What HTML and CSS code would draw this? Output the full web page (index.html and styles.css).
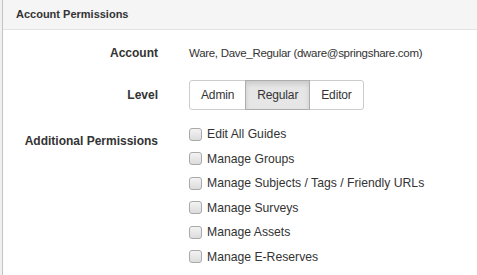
FILE: index.html
```html
<!DOCTYPE html>
<html>
<head>
<meta charset="utf-8">
<link rel="stylesheet" href="styles.css">
</head>
<body>
<div class="page">
  <div class="backdrop"></div>
  <div class="modal">
    <div class="modal-header">Account Permissions</div>
    <div class="modal-body">
      <div class="row row-account">
        <div class="label">Account</div>
        <div class="value">Ware, Dave_Regular (dware@springshare.com)</div>
      </div>
      <div class="row row-level">
        <div class="label">Level</div>
        <div class="value">
          <div class="btn-group">
            <span class="btn">Admin</span>
            <span class="btn active">Regular</span>
            <span class="btn">Editor</span>
          </div>
        </div>
      </div>
      <div class="row row-perms">
        <div class="label label-perms">Additional Permissions</div>
        <div class="value checks">
          <label class="check"><span class="box"></span>Edit All Guides</label>
          <label class="check"><span class="box"></span>Manage Groups</label>
          <label class="check"><span class="box"></span>Manage Subjects / Tags / Friendly URLs</label>
          <label class="check"><span class="box"></span>Manage Surveys</label>
          <label class="check"><span class="box"></span>Manage Assets</label>
          <label class="check"><span class="box"></span>Manage E-Reserves</label>
        </div>
      </div>
    </div>
  </div>
</div>
</body>
</html>
```
FILE: styles.css
```css
html, body {
  margin: 0;
  padding: 0;
  background: #fff;
}
body {
  font-family: "Liberation Sans", Arial, sans-serif;
  font-size: 12px;
  color: #333;
}
.page {
  display: flex;
  height: 275px;
  overflow: hidden;
}
.backdrop {
  width: 2px;
  background: #eef0f2;
  flex: none;
}
.modal {
  flex: 1;
  border-left: 1px solid #c4c4c4;
  background: #fff;
}
.modal-header {
  height: 29px;
  line-height: 29px;
  background: #f5f5f5;
  border-bottom: 1px solid #e3e3e3;
  padding-left: 13px;
  font-weight: bold;
  font-size: 11px;
  color: #333;
}
.modal-body {
  padding-top: 14px;
}
.row {
  display: grid;
  grid-template-columns: 155px 1fr;
  column-gap: 31px;
}
.label {
  text-align: right;
  font-weight: bold;
  font-size: 12px;
}
.row-account {
  line-height: 18px;
  margin-bottom: 18px;
}
.row-account .value {
  font-size: 11.5px;
  letter-spacing: -0.3px;
}
.row-level {
  align-items: center;
  margin-bottom: 12px;
}
.btn-group {
  display: inline-flex;
}
.btn {
  display: inline-block;
  height: 28px;
  line-height: 28px;
  padding: 0 11px;
  border: 1px solid #ccc;
  background: #fff;
  margin-left: -1px;
  letter-spacing: -0.15px;
}
.btn:first-child {
  margin-left: 0;
  border-radius: 3px 0 0 3px;
}
.btn:last-child {
  border-radius: 0 3px 3px 0;
}
.btn.active {
  background: #e6e6e6;
  border-color: #adadad;
  box-shadow: inset 0 3px 5px rgba(0,0,0,0.125);
  position: relative;
}
.label-perms {
  padding-top: 12px;
}
.checks {
  display: flex;
  flex-direction: column;
  font-size: 12.2px;
}
.check {
  display: flex;
  align-items: center;
  height: 24.5px;
}
.box {
  width: 11px;
  height: 11px;
  border: 1px solid #a9a9a9;
  border-radius: 3px;
  background: linear-gradient(#f3f3f3, #dcdcdc);
  margin-right: 5px;
  flex: none;
}
```
